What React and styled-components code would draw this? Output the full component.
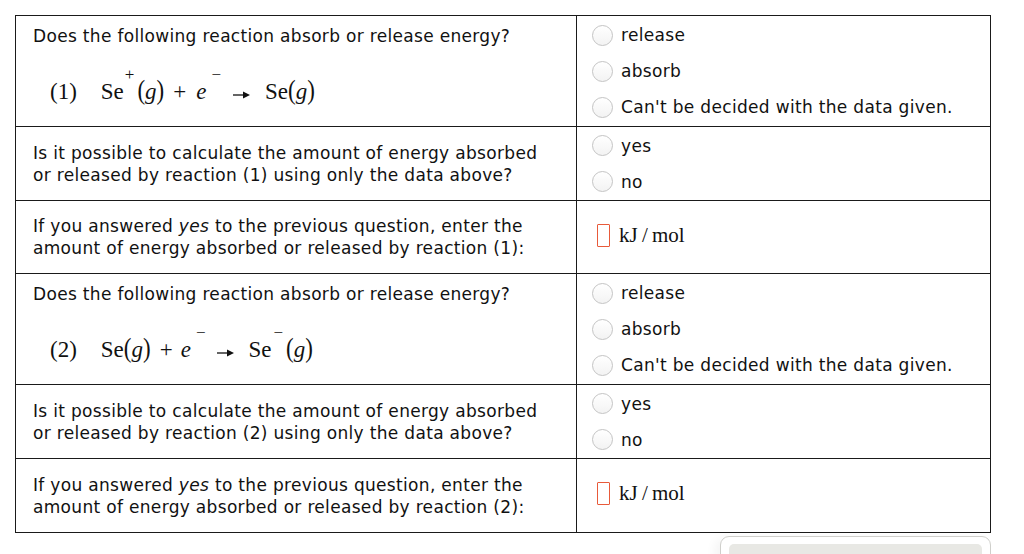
import React from 'react';
import styled, { createGlobalStyle } from 'styled-components';

const GlobalStyle = createGlobalStyle`
  html, body {
    margin: 0;
    padding: 0;
    background: #fff;
    overflow: hidden;
  }
  body {
    font-family: "DejaVu Sans", Verdana, sans-serif;
    color: #111;
  }
`;

const Page = styled.div`
  padding: 15px;
  width: 1024px;
  height: 554px;
  box-sizing: border-box;
`;

const Table = styled.div`
  display: grid;
  grid-template-columns: 561px 414px;
  border-top: 1px solid #1a1a1a;
  border-left: 1px solid #1a1a1a;
  width: 976px;
  box-sizing: border-box;
`;

const Cell = styled.div`
  box-sizing: border-box;
  height: ${p => p.h}px;
  border-right: 1px solid #1a1a1a;
  border-bottom: 1px solid #1a1a1a;
`;

const QCell = styled(Cell)`
  padding-left: 17px;
  display: flex;
  flex-direction: column;
  justify-content: ${p => (p.top ? 'flex-start' : 'center')};
  padding-top: ${p => (p.top ? '9px' : '0')};
`;

const AnswerCell = styled(Cell)`
  padding-left: 15px;
  display: flex;
  flex-direction: column;
  justify-content: center;
`;

const Question = styled.div`
  font-size: 17px;
  line-height: 22px;
  letter-spacing: 0.32px;

  em {
    font-style: italic;
  }
`;

const Equation = styled.div`
  margin-top: 30px;
  margin-left: 17px;
  height: 30px;
  display: flex;
  align-items: flex-end;
  font-family: "Liberation Serif", "Times New Roman", serif;
  font-size: 23px;
  line-height: 30px;
  color: #111;
  white-space: nowrap;
`;

const Num = styled.span`
  margin-right: 24px;
`;

const Sym = styled.span`
  font-style: ${p => (p.it ? 'italic' : 'normal')};
  margin-left: ${p => p.ml || 0}px;
`;

const Paren = styled.span`
  display: inline-block;
  transform: scaleY(1.15);
  transform-origin: 50% 70%;
`;

const Sup = styled.span`
  display: inline-block;
  font-size: 17px;
  position: relative;
  top: -17px;
  margin: 0 ${p => p.mr ?? 4}px 0 ${p => p.ml ?? 2}px;
`;

const Arrow = styled.svg`
  width: 17px;
  height: 10px;
  margin: 0 ${p => p.mr ?? 16}px 0 ${p => p.ml ?? 14}px;
  align-self: center;
  position: relative;
  top: 3px;
`;

const Option = styled.label`
  display: flex;
  align-items: center;
  height: 36px;
  font-size: 17px;
  letter-spacing: 0.32px;
  color: #111;
`;

const Radio = styled.span`
  width: 19px;
  height: 19px;
  border-radius: 50%;
  border: 1px solid #c4c4c4;
  background: linear-gradient(#ffffff, #f3f3f3);
  margin-right: 8px;
  flex-shrink: 0;
`;

const InputRow = styled.div`
  display: flex;
  align-items: center;
  margin-top: -4px;
`;

const Blank = styled.span`
  width: 11px;
  height: 21px;
  border: 1.5px solid #e85a3a;
  border-radius: 1px;
  margin: 0 9px 0 5px;
`;

const Unit = styled.span`
  font-family: "Liberation Serif", "Times New Roman", serif;
  font-size: 21px;
  color: #111;
`;

const Dock = styled.div`
  margin: 3px 0 0 705px;
  width: 271px;
  height: 40px;
  box-sizing: border-box;
  border: 1px solid #cfcfcb;
  border-radius: 9px;
  background: #fff;
  padding: 7px 8px 0 8px;
  box-shadow: -6px 2px 10px rgba(0, 0, 0, 0.04);
`;

const DockBar = styled.div`
  height: 30px;
  border-radius: 5px;
  background: #e8e8e4;
`;

const Minus = () => <span>&minus;</span>;

const RightArrow = ({ ml, mr }) => (
  <Arrow viewBox="0 0 17 10" ml={ml} mr={mr}>
    <line x1="0" y1="5" x2="11" y2="5" stroke="#111" strokeWidth="1.3" />
    <polygon points="10,1.5 17,5 10,8.5" fill="#111" />
  </Arrow>
);

const Gas = () => (
  <>
    <Paren>(</Paren>
    <Sym it>g</Sym>
    <Paren>)</Paren>
  </>
);

const Radios = ({ items }) => (
  <AnswerCell h={items.length === 3 ? 111 : 74}>
    {items.map(t => (
      <Option key={t}>
        <Radio />
        {t}
      </Option>
    ))}
  </AnswerCell>
);

const EnergyInput = ({ h }) => (
  <AnswerCell h={h}>
    <InputRow>
      <Blank />
      <Unit>kJ&thinsp;/&thinsp;mol</Unit>
    </InputRow>
  </AnswerCell>
);

const Reaction1 = () => (
  <Equation>
    <Num>(1)</Num>
    <Sym>Se</Sym>
    <Sup ml={1} mr={3}>+</Sup>
    <Gas />
    <Sym ml={9}>+</Sym>
    <Sym it ml={10}>e</Sym>
    <Sup ml={5} mr={0}>
      <Minus />
    </Sup>
    <RightArrow ml={12} mr={15} />
    <Sym>Se</Sym>
    <Gas />
  </Equation>
);

const Reaction2 = () => (
  <Equation>
    <Num>(2)</Num>
    <Sym>Se</Sym>
    <Gas />
    <Sym ml={9}>+</Sym>
    <Sym it ml={8}>e</Sym>
    <Sup ml={5} mr={0}>
      <Minus />
    </Sup>
    <RightArrow ml={12} mr={14} />
    <Sym>Se</Sym>
    <Sup ml={2} mr={3}>
      <Minus />
    </Sup>
    <Gas />
  </Equation>
);

const Block = ({ n, Reaction }) => (
  <>
    <QCell h={111} top>
      <Question>Does the following reaction absorb or release energy?</Question>
      <Reaction />
    </QCell>
    <Radios items={['release', 'absorb', "Can't be decided with the data given."]} />

    <QCell h={74}>
      <Question>
        Is it possible to calculate the amount of energy absorbed
        <br />
        or released by reaction ({n}) using only the data above?
      </Question>
    </QCell>
    <Radios items={['yes', 'no']} />

    <QCell h={n === 1 ? 73 : 74}>
      <Question>
        If you answered <em>yes</em> to the previous question, enter the
        <br />
        amount of energy absorbed or released by reaction ({n}):
      </Question>
    </QCell>
    <EnergyInput h={n === 1 ? 73 : 74} />
  </>
);

export default function App() {
  return (
    <Page>
      <GlobalStyle />
      <Table>
        <Block n={1} Reaction={Reaction1} />
        <Block n={2} Reaction={Reaction2} />
      </Table>
      <Dock>
        <DockBar />
      </Dock>
    </Page>
  );
}
